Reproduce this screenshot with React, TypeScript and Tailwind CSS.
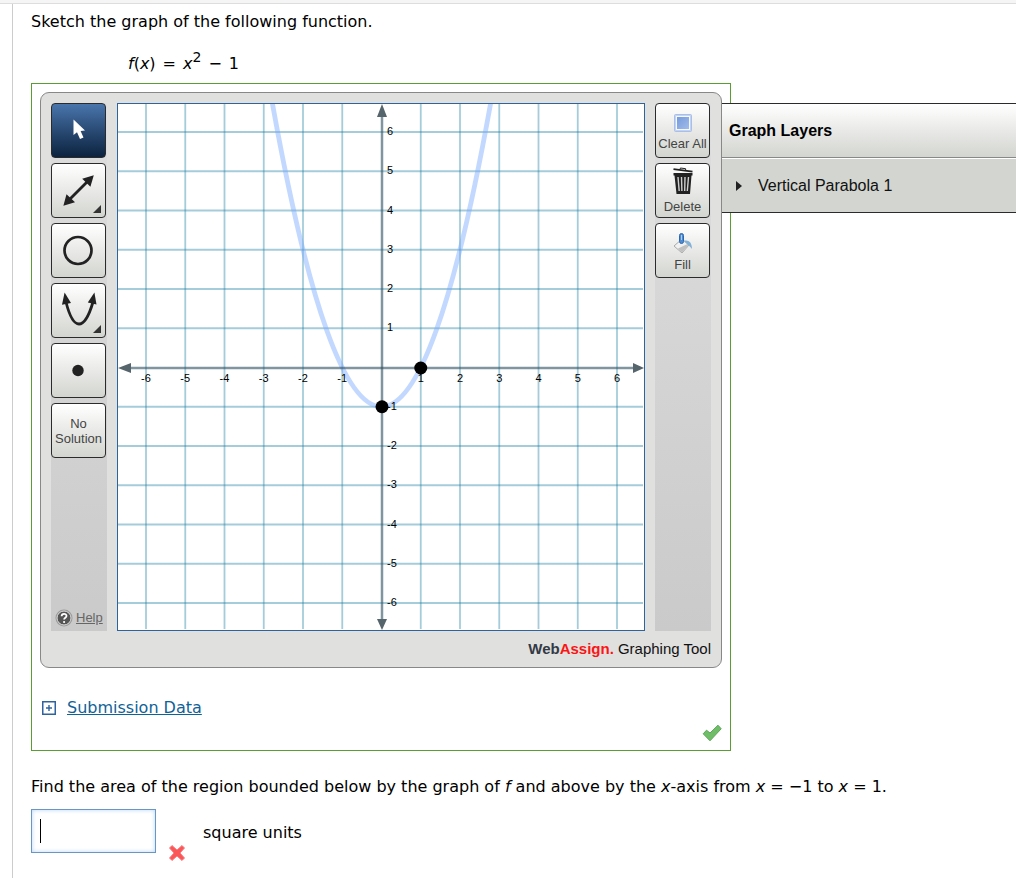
import type { ReactNode } from "react";
import clsx from "clsx";

const UNIT = 39.25;
const ORIGIN = 263.5;
const TICKS = [-6, -5, -4, -3, -2, -1, 1, 2, 3, 4, 5, 6];

const Graph = () => (
  <svg
    viewBox="0 0 526 526"
    className="block w-full bg-white"
    role="img"
    aria-label="Graph of a vertical parabola"
  >
    <g stroke="#1f7fa3" strokeOpacity="0.4" strokeWidth="1.8">
      {TICKS.map((n) => (
        <g key={n}>
          <line x1={ORIGIN + n * UNIT} x2={ORIGIN + n * UNIT} y1="0" y2="525" />
          <line y1={ORIGIN - n * UNIT} y2={ORIGIN - n * UNIT} x1="0" x2="525" />
        </g>
      ))}
    </g>
    <path
      d="M153.6 -5 Q263.5 610.5 373.4 -5"
      fill="none"
      stroke="#77a9ff"
      strokeOpacity="0.45"
      strokeWidth="4.8"
    />
    <g stroke="#2b4f60" strokeOpacity="0.6" strokeWidth="2.5">
      <line x1="12" x2="516" y1={ORIGIN + 0.5} y2={ORIGIN + 0.5} />
      <line y1="12" y2="516" x1={ORIGIN + 0.5} x2={ORIGIN + 0.5} />
    </g>
    <g fill="#56646b">
      <path d="M0 264 L13 259 V269 Z" />
      <path d="M526 264 L515 259 V269 Z" />
      <path d="M264 0 L259 13 H269 Z" />
      <path d="M264 526 L259 515 H269 Z" />
    </g>
    <circle cx={ORIGIN + 0.5} cy={ORIGIN + UNIT} r="6.5" />
    <circle cx={ORIGIN + UNIT} cy={ORIGIN + 0.5} r="6.5" />
    <g fill="#000" fontSize="11" fontFamily="Liberation Sans, Arial, sans-serif">
      {TICKS.map((n) => (
        <g key={n}>
          <text x={ORIGIN + n * UNIT} y="278" textAnchor="middle">
            {n}
          </text>
          <text x="269" y={ORIGIN - n * UNIT + 3}>
            {n}
          </text>
        </g>
      ))}
    </g>
  </svg>
);

const Icon = ({ children }: { children: ReactNode }) => (
  <svg viewBox="1 1 53 53" className="block size-full" aria-hidden="true">
    {children}
  </svg>
);

const Corner = () => <path d="M42 50 L50 42 V50 Z" fill="#333" />;

type ToolProps = {
  label: string;
  active?: boolean;
  children: ReactNode;
};

const Tool = ({ label, active, children }: ToolProps) => (
  <button
    type="button"
    aria-label={label}
    className={clsx(
      "flex size-[55px] shrink-0 flex-col items-center justify-center rounded border border-[#2b2b2b] bg-linear-to-b text-[13px] leading-[15px] text-[#444]",
      active ? "from-[#4a76ad] to-[#0c2340]" : "from-white to-[#d3d5d0]"
    )}
  >
    {children}
  </button>
);

const DrawTools = () => (
  <div className="flex w-14 flex-col gap-[5px] bg-linear-to-b from-[#dedede] to-[#cacaca]">
    <Tool label="Select" active>
      <Icon>
        <path
          d="M22.5 16.5 V32 L26 29.2 L29 36 L32.5 34.5 L29.6 28 L34 27.5 Z"
          fill="#fff"
        />
      </Icon>
    </Tool>
    <Tool label="Line">
      <Icon>
        <path d="M18 37 L37.5 17.5" stroke="#222" strokeWidth="2.8" />
        <path d="M12.4 42.8 L15.5 31.2 L24 39.2 Z" fill="#222" />
        <path d="M42.8 12.2 L39.4 23.8 L31.2 15.8 Z" fill="#222" />
        <Corner />
      </Icon>
    </Tool>
    <Tool label="Circle">
      <Icon>
        <circle cx="27" cy="27.5" r="13.5" fill="none" stroke="#222" strokeWidth="2.7" />
      </Icon>
    </Tool>
    <Tool label="Parabola">
      <Icon>
        <path
          d="M15 19 C18 31 22.5 41 28 41 C33.5 41 38.5 31 42 19"
          fill="none"
          stroke="#222"
          strokeWidth="2.8"
        />
        <path d="M13.6 9.5 L20 20 L11 21.8 Z" fill="#222" />
        <path d="M43.4 9.5 L45.5 21.5 L36.8 19.5 Z" fill="#222" />
        <Corner />
      </Icon>
    </Tool>
    <Tool label="Point">
      <Icon>
        <circle cx="27" cy="27.5" r="5.7" fill="#222" />
      </Icon>
    </Tool>
    <Tool label="No Solution">
      <span>No</span>
      <span>Solution</span>
    </Tool>
    <a
      href="#help"
      className="mt-auto flex h-[27px] items-center gap-[3px] pl-1 text-[13px] text-[#666]"
    >
      <svg viewBox="0 0 18 18" className="size-[18px] shrink-0" aria-hidden="true">
        <circle cx="9" cy="9" r="8.5" fill="#999" />
        <circle cx="9" cy="9" r="7" fill="#555" stroke="#ddd" />
        <path
          d="M6.6 7.3 C6.6 4 11.6 4.2 11.5 7 C11.4 8.8 9.1 8.7 9.1 10.6"
          fill="none"
          stroke="#fff"
          strokeWidth="1.8"
        />
        <circle cx="9.1" cy="13" r="1.1" fill="#fff" />
      </svg>
      <span className="underline">Help</span>
    </a>
  </div>
);

const EditTools = () => (
  <div className="flex w-14 flex-col gap-[5px] bg-linear-to-b from-[#dedede] to-[#cacaca]">
    <Tool label="Clear All">
      <svg viewBox="0 0 18 18" className="mt-1 mb-1 size-[18px]" aria-hidden="true">
        <defs>
          <linearGradient id="clear" x1="0" y1="0" x2="1" y2="1">
            <stop offset="0" stopColor="#7499d9" />
            <stop offset="1" stopColor="#a3bdec" />
          </linearGradient>
        </defs>
        <rect x="0.5" y="0.5" width="17" height="17" rx="1" fill="#c3d3f1" stroke="#a9bfe6" />
        <rect x="2.5" y="2.5" width="13" height="13" fill="url(#clear)" stroke="#f4f8ff" />
      </svg>
      <span className="whitespace-nowrap">Clear All</span>
    </Tool>
    <Tool label="Delete">
      <svg viewBox="0 0 22 28" className="mb-1 h-7 w-[22px] shrink-0" aria-hidden="true">
        <path d="M1.5 2.2 L20.5 4.6" stroke="#222" strokeWidth="1.8" />
        <path d="M8 2.4 L8.4 1 L13.6 1.7 L13.6 3.2" fill="none" stroke="#222" />
        <path d="M1.5 6 H20.5 V8.5 H19.5 L18 27 H4.5 L2.5 8.5 H1.5 Z" fill="#222" />
        <path
          d="M6 10 L7.2 24 M9.5 10 L9.9 24 M13 10 L12.7 24 M16.5 10 L15.3 24"
          stroke="#d0d0d0"
          strokeWidth="1.4"
        />
      </svg>
      <span>Delete</span>
    </Tool>
    <Tool label="Fill">
      <svg viewBox="0 0 20 20" className="mt-1 mb-1 size-5" aria-hidden="true">
        <path d="M1 13 L9 6 L16 12 L9 20 Z" fill="#f1f1f1" stroke="#aaa" />
        <path d="M5 15.5 L14.5 11 L15.5 12 L9 19.5 Z" fill="#c0c0c0" />
        <path d="M11 8 C15 6.5 19 9 19 16 C17.5 14.5 16.5 12.5 15 12 Z" fill="#84b1d8" />
        <rect x="6.5" y="0.5" width="4" height="10" rx="2" fill="#4f8bd0" stroke="#2e66ae" />
        <path d="M8.5 2 V7" stroke="#a9cef6" />
      </svg>
      <span>Fill</span>
    </Tool>
  </div>
);

const GraphLayers = () => (
  <aside className="mt-5 -ml-[9px] min-w-0 flex-1 self-start border-y border-[#2b2b2b] font-['Liberation_Sans',Arial,sans-serif] text-base text-black">
    <h2 className="flex h-[54px] items-center border-b border-[#888] bg-linear-to-b from-white to-[#d3d5d0] pl-[7px] font-bold">
      Graph Layers
    </h2>
    <button
      type="button"
      className="flex h-[54px] w-full items-center gap-4 border-t border-white bg-[#d3d5d0] pl-[14px] text-left text-[#111]"
    >
      <svg viewBox="0 0 6 10" className="h-[10px] w-[6px]" aria-hidden="true">
        <path d="M0 0 L6 5 L0 10 Z" fill="#222" />
      </svg>
      Vertical Parabola 1
    </button>
  </aside>
);

const GraphingTool = () => (
  <section className="rounded-[9px] border border-[#888] bg-[#e0e0df] px-[10px] pt-[10px] font-['Liberation_Sans',Arial,sans-serif]">
    <div className="flex gap-[10px]">
      <DrawTools />
      <div className="min-w-0 flex-1 border border-[#2e639e]">
        <Graph />
      </div>
      <EditTools />
    </div>
    <p className="flex h-9 items-center justify-end gap-1 text-[15px] text-[#111]">
      <b className="text-[#333a45]">
        Web<span className="text-[#fb1515]">Assign.</span>
      </b>
      <span>Graphing Tool</span>
    </p>
  </section>
);

const App = () => {
  return (
    <div className="flex min-h-screen flex-col bg-white font-['DejaVu_Sans',Verdana,sans-serif] text-base text-black">
      <div className="h-1 border-b border-[#ddd] bg-[#f5f5f5]" />
      <main className="ml-3 flex-1 border-l border-[#ccc] pt-[6px] pl-[18px]">
        <p>Sketch the graph of the following function.</p>
        <p className="mt-[18px] ml-[97px] flex gap-[7px]">
          <span>
            <i>f</i>(<i>x</i>)
          </span>
          <span>=</span>
          <span>
            <i>x</i>
            <sup className="text-sm">2</sup>
          </span>
          <span>−</span>
          <span>1</span>
        </p>

        <div className="mt-[7px] flex">
          <div className="w-[700px] shrink-0 border border-[#5a9e2f] p-2">
            <GraphingTool />
            <div className="mt-7 flex items-center gap-[11px] pl-[2px]">
              <svg viewBox="0 0 14 14" className="size-[14px]" aria-hidden="true">
                <rect x="0.75" y="0.75" width="12.5" height="12.5" fill="#fff" stroke="#2e639e" strokeWidth="1.5" />
                <path d="M4 7 H10 M7 4 V10" stroke="#2e639e" strokeWidth="1.4" />
              </svg>
              <a href="#submission" className="text-[#0f6297] underline">
                Submission Data
              </a>
            </div>
            <div className="mt-1 flex justify-end">
              <svg viewBox="0 0 20 18" className="h-[18px] w-5" role="img" aria-label="Correct">
                <path
                  d="M1.2 9.8 L4.5 6.2 L8 9 L16 1.2 L19.2 4.8 L8 16.8 Z"
                  fill="#70bd68"
                  stroke="#5aa655"
                />
              </svg>
            </div>
          </div>
          <GraphLayers />
        </div>

        <p className="mt-6">
          Find the area of the region bounded below by the graph of <i>f</i> and above by the{" "}
          <i>x</i>-axis from <i>x</i> = −1 to <i>x</i> = 1.
        </p>
        <div className="mt-[10px] flex items-start">
          <div className="relative">
            <input
              id="area"
              type="text"
              autoFocus
              className="block h-11 w-[125px] border border-[#6a96c4] px-2 text-xl caret-transparent shadow-[inset_0_0_4px_#b5d5f5] outline-none"
            />
            <span className="pointer-events-none absolute inset-y-[10px] left-[9px] w-px bg-black" />
          </div>
          <svg viewBox="0 0 18 18" className="mt-[35px] ml-3 size-[18px]" role="img" aria-label="Incorrect">
            <path
              d="M1.5 4 L4 1.5 L9 6 L14 1.5 L16.5 4 L12 9 L16.5 14 L14 16.5 L9 12 L4 16.5 L1.5 14 L6 9 Z"
              fill="#fa5557"
              stroke="#fa7c7d"
              strokeLinejoin="round"
            />
          </svg>
          <label htmlFor="area" className="mt-3 ml-[17px]">
            square units
          </label>
        </div>
      </main>
    </div>
  );
};

export default App;
